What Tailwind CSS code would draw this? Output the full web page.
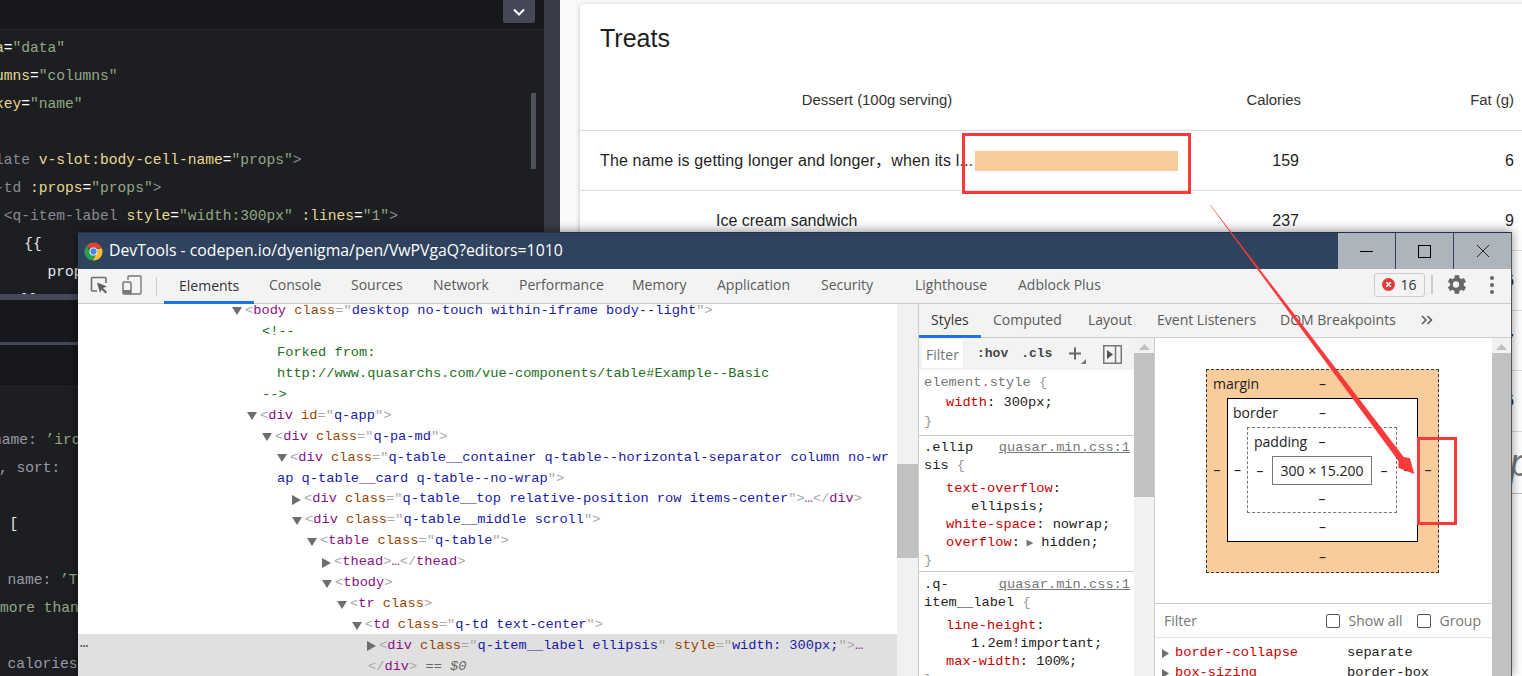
<!DOCTYPE html>
<html>
<head>
<meta charset="utf-8">
<script src="https://cdn.jsdelivr.net/npm/@tailwindcss/browser@4"></script>
</head>
<body class="bg-white">
<div class="relative w-[1522px] h-[676px] overflow-hidden flex font-['Liberation_Sans','Noto_Sans_CJK_SC',sans-serif]">

  <!-- Left: code editor -->
  <div class="w-[544px] shrink-0 h-full flex flex-col bg-[#1d1e22] overflow-hidden font-['Liberation_Mono','DejaVu_Sans_Mono',monospace] text-[14.6px] text-[#c8c8c8]">
    <div class="h-[30px] shrink-0 bg-[#17181b] border-b border-[#27282d] flex justify-end pr-[9px]">
      <div class="w-[32px] h-[23px] bg-[#444857] rounded-b-[2px] flex items-center justify-center">
        <svg width="12" height="8" viewBox="0 0 12 8"><path d="M1 1.5 L6 6.5 L11 1.5" fill="none" stroke="#fff" stroke-width="2"/></svg>
      </div>
    </div>
    <div class="relative h-[264px] shrink-0 overflow-hidden pt-[4px] -ml-[5px] [&>div]:h-[28px] [&>div]:leading-[28px] [&>div]:whitespace-pre">
      <div><span class="text-[#e6da8f]">a</span><span class="text-white">=</span><span class="text-[#93a883]">″data″</span></div>
      <div><span class="text-[#e6da8f]">umns</span><span class="text-white">=</span><span class="text-[#93a883]">″columns″</span></div>
      <div><span class="text-[#e6da8f]">key</span><span class="text-white">=</span><span class="text-[#93a883]">″name″</span></div>
      <div></div>
      <div><span class="text-[#8b8c92]">late </span><span class="text-[#e6da8f]">v-slot:body-cell-name</span><span class="text-white">=</span><span class="text-[#93a883]">″props″</span><span class="text-[#8b8c92]">&gt;</span></div>
      <div><span class="text-[#8b8c92]">-td </span><span class="text-[#e6da8f]">:props</span><span class="text-white">=</span><span class="text-[#93a883]">″props″</span><span class="text-[#8b8c92]">&gt;</span></div>
      <div><span class="text-[#8b8c92]"> &lt;q-item-label </span><span class="text-[#e6da8f]">style</span><span class="text-white">=</span><span class="text-[#93a883]">″width:300px″ </span><span class="text-[#e6da8f]">:lines</span><span class="text-white">=</span><span class="text-[#93a883]">″1″</span><span class="text-[#8b8c92]">&gt;</span></div>
      <div class="text-[#e8e8e8] pl-[3px]">   {{</div>
      <div class="text-[#e8e8e8]">      props</div>
      <div class="text-[#e8e8e8]">   }}</div>
    </div>
    <div class="h-[6px] shrink-0 bg-[#444857]"></div>
    <div class="h-[42px] shrink-0 bg-[#17181b]"></div>
    <div class="h-[3px] shrink-0 bg-[#444857]"></div>
    <div class="h-[42px] shrink-0 bg-[#17181b] border-b border-[#27282d]"></div>
    <div class="flex-1 pt-[39px] [&>div]:h-[28px] [&>div]:leading-[28px] [&>div]:whitespace-pre">
      <div class="-ml-[7px]"><span class="text-[#9a9aa6]">name: </span><span class="text-[#93a883]">’iron</span></div>
      <div class="-ml-[1px]"><span class="text-[#9a9aa6]">, sort: </span></div>
      <div></div>
      <div class="text-[#e8e8e8] -ml-[8px]">  [</div>
      <div></div>
      <div class="-ml-[10px]"><span class="text-[#9a9aa6]">  name: </span><span class="text-[#93a883]">’The</span></div>
      <div><span class="text-[#93a883]">more than</span></div>
      <div></div>
      <div class="text-[#9a9aa6] -ml-[10px]">  calories</div>
    </div>
  </div>
  <div class="absolute left-[531px] top-[93px] w-[5px] h-[76px] bg-[#4d4f5a]"></div>

  <!-- Divider -->
  <div class="w-[16px] shrink-0 h-full bg-[#3a3c47]"></div>

  <!-- Right: rendered page -->
  <div class="flex-1 h-full pl-[20px] pt-[4px] bg-[#fafafa]">
    <div class="w-[1000px] h-[680px] bg-white rounded-[4px] shadow-[0_1px_5px_rgba(0,0,0,0.25)] text-[16px] text-[#1f1f1f]">
      <div class="h-[65px] pl-[20px] pt-[16px] text-[25px] leading-[36px]">Treats</div>
      <div class="h-[62px] flex items-center border-b border-[#dcdcdc] text-[14.9px] text-[#333] pt-[1px]">
        <div class="w-[594px] text-center">Dessert (100g serving)</div>
        <div class="w-[127px] text-right">Calories</div>
        <div class="w-[213px] text-right">Fat (g)</div>
      </div>
      <div class="h-[60px] flex items-center border-b border-[#dcdcdc]">
        <div class="w-[594px] pl-[20px]"><div class="w-[375px] whitespace-nowrap overflow-hidden tracking-[0.15px]">The name is getting longer and longer，when its l...</div></div>
        <div class="w-[125px] text-right">159</div>
        <div class="w-[215px] text-right">6</div>
      </div>
      <div class="h-[60px] flex items-center border-b border-[#dcdcdc]">
        <div class="w-[594px] pl-[136px]">Ice cream sandwich</div>
        <div class="w-[125px] text-right">237</div>
        <div class="w-[215px] text-right">9</div>
      </div>
      <div class="h-[60px] flex items-center border-b border-[#dcdcdc]"><div class="w-[934px] text-right">6</div></div>
      <div class="h-[60px] flex items-center border-b border-[#dcdcdc]"><div class="w-[934px] text-right">7</div></div>
      <div class="h-[61px] flex items-center border-b border-[#dcdcdc]"><div class="w-[934px] text-right">6</div></div>
      <div class="h-[62px] flex items-center border-b border-[#bbb]"><div class="w-[951px] text-right text-[38px] leading-[38px] italic text-[#777]">p</div></div>
    </div>
  </div>

  <!-- DevTools window -->
  <div class="absolute left-[78px] top-[232px] w-[1434px] h-[444px] flex flex-col bg-white border-r border-[#555] shadow-[0_-1px_10px_rgba(0,0,0,0.45)] font-['Open_Sans',sans-serif]">
    <!-- title bar -->
    <div class="h-[37px] shrink-0 bg-[#2f435e] flex items-center border-t border-[#233247]">
      <svg class="ml-[6px] shrink-0" width="19" height="19" viewBox="0 0 20 20">
        <path d="M10 0.5 A9.5 9.5 0 0 1 18.8 6.5 L10 6.5 A3.5 3.5 0 0 0 6.8 8.2 L2.9 3.7 A9.5 9.5 0 0 1 10 0.5Z" fill="#db4437"/>
        <path d="M18.8 6.5 A9.5 9.5 0 0 1 9.2 19.5 L13 12.5 A3.5 3.5 0 0 0 13 7.5Z" fill="#fbc02d"/>
        <path d="M9.2 19.5 A9.5 9.5 0 0 1 2.9 3.7 L7 11.5 A3.5 3.5 0 0 0 13 12.5Z" fill="#2e9e4f"/>
        <circle cx="10" cy="10" r="4.3" fill="#fff"/><circle cx="10" cy="10" r="3.3" fill="#4a86e8"/>
      </svg>
      <div class="ml-[6px] text-[15.8px] text-white whitespace-nowrap flex-1">DevTools - codepen.io/dyenigma/pen/VwPVgaQ?editors=1010</div>
      <div class="w-[173px] h-full shrink-0 bg-[#aeb4bc] flex">
        <div class="flex-1 flex items-center justify-center border-r border-[#2f435e]"><div class="w-[13px] h-[1px] bg-black"></div></div>
        <div class="flex-1 flex items-center justify-center border-r border-[#2f435e]"><div class="w-[13px] h-[13px] border border-black"></div></div>
        <div class="flex-1 flex items-center justify-center"><svg width="14" height="14" viewBox="0 0 14 14"><path d="M1 1 L13 13 M13 1 L1 13" stroke="#222" stroke-width="1"/></svg></div>
      </div>
    </div>
    <!-- main toolbar -->
    <div class="h-[35px] shrink-0 bg-[#f3f3f3] border-b border-[#ccc] flex items-stretch text-[14px] text-[#5a5a5a] whitespace-nowrap [&>div]:pb-[3px]">
      <div class="w-[86px] shrink-0 flex items-center relative">
        <svg class="ml-[12px]" width="19" height="18" viewBox="0 0 19 18"><path d="M7 15 H2.5 A1 1 0 0 1 1.5 14 V2.5 A1 1 0 0 1 2.5 1.5 H15 A1 1 0 0 1 16 2.5 V7" fill="none" stroke="#6e6e6e" stroke-width="1.6"/><path d="M7 6.5 L17 10.5 L13 12 L17 16 L15.5 17.5 L11.5 13.5 L10 17Z" fill="#5f5f5f"/></svg>
        <svg class="ml-[13px]" width="20" height="20" viewBox="0 0 20 20"><path d="M6 5 V1.8 A1 1 0 0 1 7 1 H18 A1 1 0 0 1 19 2 V18 A1 1 0 0 1 18 19 H8" fill="none" stroke="#777" stroke-width="1.4"/><rect x="1" y="7" width="8" height="12" rx="1" fill="none" stroke="#777" stroke-width="1.5"/><rect x="1" y="15" width="8" height="4" fill="#777"/></svg>
        <div class="absolute right-[7px] top-[8px] w-[1px] h-[19px] bg-[#ccc]"></div>
      </div>
      <div class="w-[90px] pl-[15px] flex items-center border-b-[3px] border-[#1a73e8] text-[#333] -mb-[1px] !pb-0">Elements</div>
      <div class="w-[82px] pl-[15px] flex items-center">Console</div>
      <div class="w-[82px] pl-[15px] flex items-center">Sources</div>
      <div class="w-[86px] pl-[15px] flex items-center">Network</div>
      <div class="w-[113px] pl-[15px] flex items-center">Performance</div>
      <div class="w-[85px] pl-[15px] flex items-center">Memory</div>
      <div class="w-[104px] pl-[15px] flex items-center">Application</div>
      <div class="w-[94px] pl-[15px] flex items-center">Security</div>
      <div class="w-[103px] pl-[15px] flex items-center">Lighthouse</div>
      <div class="w-[110px] pl-[15px] flex items-center">Adblock Plus</div>
      <div class="flex-1 flex items-center justify-end pr-[17px]">
        <div class="h-[24px] w-[51px] border border-[#ccc] rounded-[3px] flex items-center justify-center gap-[5px] text-[#333]">
          <svg width="13" height="13" viewBox="0 0 13 13"><circle cx="6.5" cy="6.5" r="6.5" fill="#e23a3f"/><path d="M4.3 4.3 L8.7 8.7 M8.7 4.3 L4.3 8.7" stroke="#fff" stroke-width="1.6"/></svg>16
        </div>
        <div class="w-[2px] h-[19px] bg-[#ccc] ml-[6px] mr-[13px]"></div>
        <svg width="20" height="19" viewBox="2.5 3 19 18"><path fill="#666" fill-rule="evenodd" d="M19.4 13 a7.5 7.5 0 0 0 0-2 l2.1-1.6-2-3.5-2.5 1 a7.5 7.5 0 0 0-1.7-1 L14.9 3.2 h-4 L10.5 5.9 a7.5 7.5 0 0 0-1.7 1 l-2.5-1-2 3.5 2.1 1.6 a7.5 7.5 0 0 0 0 2 l-2.1 1.6 2 3.5 2.5-1 a7.5 7.5 0 0 0 1.7 1 l.4 2.7 h4 l.4-2.7 a7.5 7.5 0 0 0 1.7-1 l2.5 1 2-3.5Z M12 15 a3 3 0 1 1 0-6 a3 3 0 0 1 0 6Z"/></svg>
        <div class="ml-[24px] flex flex-col gap-[3px]">
          <div class="w-[4px] h-[4px] rounded-full bg-[#666]"></div>
          <div class="w-[4px] h-[4px] rounded-full bg-[#666]"></div>
          <div class="w-[4px] h-[4px] rounded-full bg-[#666]"></div>
        </div>
      </div>
    </div>
    <!-- body -->
    <div class="flex-1 flex min-h-0">
      <!-- elements -->
      <div class="w-[840px] shrink-0 relative overflow-hidden font-['Liberation_Mono',monospace] text-[13.68px] text-[#881280] [&>div]:whitespace-pre [&>div]:h-[20.95px] [&>div]:leading-[20.95px] [&>div]:flex [&>div]:items-center">
        <div class="pl-[167px] -mt-[3px]"><svg class="-ml-[13px] mr-[3px]" width="10" height="8" viewBox="0 0 10 8"><path d="M0 0H10L5 8Z" fill="#6e6e6e"/></svg><span><span class="text-[#a8a8a8]">&lt;</span>body <span class="text-[#994500]">class</span><span class="text-[#a8a8a8]">="</span><span class="text-[#1a1aa6]">desktop no-touch within-iframe body--light</span><span class="text-[#a8a8a8]">"&gt;</span></span></div>
        <div class="pl-[184px] text-[#236e25]">&lt;!--</div>
        <div class="pl-[199px] text-[#236e25]">Forked from:</div>
        <div class="pl-[199px] text-[#236e25]">http://www.quasarchs.com/vue-components/table#Example--Basic</div>
        <div class="pl-[184px] text-[#236e25]">--&gt;</div>
        <div class="pl-[182px]"><svg class="-ml-[13px] mr-[3px]" width="10" height="8" viewBox="0 0 10 8"><path d="M0 0H10L5 8Z" fill="#6e6e6e"/></svg><span><span class="text-[#a8a8a8]">&lt;</span>div <span class="text-[#994500]">id</span><span class="text-[#a8a8a8]">="</span><span class="text-[#1a1aa6]">q-app</span><span class="text-[#a8a8a8]">"&gt;</span></span></div>
        <div class="pl-[197px]"><svg class="-ml-[13px] mr-[3px]" width="10" height="8" viewBox="0 0 10 8"><path d="M0 0H10L5 8Z" fill="#6e6e6e"/></svg><span><span class="text-[#a8a8a8]">&lt;</span>div <span class="text-[#994500]">class</span><span class="text-[#a8a8a8]">="</span><span class="text-[#1a1aa6]">q-pa-md</span><span class="text-[#a8a8a8]">"&gt;</span></span></div>
        <div class="pl-[212px]"><svg class="-ml-[13px] mr-[3px]" width="10" height="8" viewBox="0 0 10 8"><path d="M0 0H10L5 8Z" fill="#6e6e6e"/></svg><span><span class="text-[#a8a8a8]">&lt;</span>div <span class="text-[#994500]">class</span><span class="text-[#a8a8a8]">="</span><span class="text-[#1a1aa6]">q-table__container q-table--horizontal-separator column no-wr</span></span></div>
        <div class="pl-[199px] text-[#1a1aa6]"><span>ap q-table__card q-table--no-wrap<span class="text-[#a8a8a8]">"&gt;</span></span></div>
        <div class="pl-[227px]"><svg class="-ml-[13px] mr-[3px]" width="9" height="10" viewBox="0 0 9 10"><path d="M0 0V10L9 5Z" fill="#6e6e6e"/></svg><span><span class="text-[#a8a8a8]">&lt;</span>div <span class="text-[#994500]">class</span><span class="text-[#a8a8a8]">="</span><span class="text-[#1a1aa6]">q-table__top relative-position row items-center</span><span class="text-[#a8a8a8]">"&gt;</span>…<span class="text-[#a8a8a8]">&lt;/</span>div<span class="text-[#a8a8a8]">&gt;</span></span></div>
        <div class="pl-[227px]"><svg class="-ml-[13px] mr-[3px]" width="10" height="8" viewBox="0 0 10 8"><path d="M0 0H10L5 8Z" fill="#6e6e6e"/></svg><span><span class="text-[#a8a8a8]">&lt;</span>div <span class="text-[#994500]">class</span><span class="text-[#a8a8a8]">="</span><span class="text-[#1a1aa6]">q-table__middle scroll</span><span class="text-[#a8a8a8]">"&gt;</span></span></div>
        <div class="pl-[242px]"><svg class="-ml-[13px] mr-[3px]" width="10" height="8" viewBox="0 0 10 8"><path d="M0 0H10L5 8Z" fill="#6e6e6e"/></svg><span><span class="text-[#a8a8a8]">&lt;</span>table <span class="text-[#994500]">class</span><span class="text-[#a8a8a8]">="</span><span class="text-[#1a1aa6]">q-table</span><span class="text-[#a8a8a8]">"&gt;</span></span></div>
        <div class="pl-[257px]"><svg class="-ml-[13px] mr-[3px]" width="9" height="10" viewBox="0 0 9 10"><path d="M0 0V10L9 5Z" fill="#6e6e6e"/></svg><span><span class="text-[#a8a8a8]">&lt;</span>thead<span class="text-[#a8a8a8]">&gt;</span>…<span class="text-[#a8a8a8]">&lt;/</span>thead<span class="text-[#a8a8a8]">&gt;</span></span></div>
        <div class="pl-[257px]"><svg class="-ml-[13px] mr-[3px]" width="10" height="8" viewBox="0 0 10 8"><path d="M0 0H10L5 8Z" fill="#6e6e6e"/></svg><span><span class="text-[#a8a8a8]">&lt;</span>tbody<span class="text-[#a8a8a8]">&gt;</span></span></div>
        <div class="pl-[272px]"><svg class="-ml-[13px] mr-[3px]" width="10" height="8" viewBox="0 0 10 8"><path d="M0 0H10L5 8Z" fill="#6e6e6e"/></svg><span><span class="text-[#a8a8a8]">&lt;</span>tr <span class="text-[#994500]">class</span><span class="text-[#a8a8a8]">&gt;</span></span></div>
        <div class="pl-[287px]"><svg class="-ml-[13px] mr-[3px]" width="10" height="8" viewBox="0 0 10 8"><path d="M0 0H10L5 8Z" fill="#6e6e6e"/></svg><span><span class="text-[#a8a8a8]">&lt;</span>td <span class="text-[#994500]">class</span><span class="text-[#a8a8a8]">="</span><span class="text-[#1a1aa6]">q-td text-center</span><span class="text-[#a8a8a8]">"&gt;</span></span></div>
        <div class="pl-[302px] bg-[#e0e0e0] relative -mt-[2px] pt-[2px] !h-[22.95px]"><span class="absolute left-[2px] top-0 text-[#666] font-bold">…</span><svg class="-ml-[13px] mr-[3px]" width="9" height="10" viewBox="0 0 9 10"><path d="M0 0V10L9 5Z" fill="#6e6e6e"/></svg><span><span class="text-[#a8a8a8]">&lt;</span>div <span class="text-[#994500]">class</span><span class="text-[#a8a8a8]">="</span><span class="text-[#1a1aa6]">q-item__label ellipsis</span><span class="text-[#a8a8a8]">" </span><span class="text-[#994500]">style</span><span class="text-[#a8a8a8]">="</span><span class="text-[#1a1aa6]">width: 300px;</span><span class="text-[#a8a8a8]">"&gt;</span>…</span></div>
        <div class="pl-[290px] bg-[#e0e0e0]"><span><span class="text-[#a8a8a8]">&lt;/</span>div<span class="text-[#a8a8a8]">&gt;</span><span class="text-[#666]"> == <i>$0</i></span></span></div>
        <div class="absolute right-0 top-0 !h-full w-[21px] bg-[#f1f1f1] !block">
          <div class="mt-[118px] h-[94px] bg-[#c1c1c1]"></div>
        </div>
      </div>
      <!-- side pane -->
      <div class="flex-1 min-w-0 flex flex-col bg-white border-l border-[#ccc]">
        <div class="h-[34px] shrink-0 bg-[#f3f3f3] border-b border-[#ccc] flex text-[14px] text-[#5a5a5a] whitespace-nowrap [&>div]:pb-[2px]">
          <div class="w-[62px] pl-[12px] flex items-center border-b-[3px] border-[#1a73e8] text-[#333] -mb-[1px] !pb-0">Styles</div>
          <div class="w-[95px] pl-[12px] flex items-center">Computed</div>
          <div class="w-[69px] pl-[12px] flex items-center">Layout</div>
          <div class="w-[123px] pl-[12px] flex items-center">Event Listeners</div>
          <div class="w-[153px] pl-[12px] flex items-center">DOM Breakpoints</div>
          <div class="flex items-center"><svg width="12" height="10" viewBox="0 0 12 10"><path d="M1 1 L5 5 L1 9 M6.5 1 L10.5 5 L6.5 9" fill="none" stroke="#555" stroke-width="1.5"/></svg></div>
        </div>
        <div class="flex-1 flex min-h-0">
          <!-- styles -->
          <div class="w-[236px] shrink-0 flex border-r border-[#ccc] overflow-hidden">
            <div class="w-[215px] shrink-0 flex flex-col">
              <div class="h-[32px] shrink-0 bg-[#f3f3f3] flex items-center">
                <div class="ml-[3px] w-[41px] h-[28px] bg-white flex items-center justify-center text-[14px] text-[#777]">Filter</div>
                <div class="ml-[14px] font-['Liberation_Mono',monospace] font-bold text-[13px] text-[#444]">:hov</div>
                <div class="ml-[13px] font-['Liberation_Mono',monospace] font-bold text-[13px] text-[#444]">.cls</div>
                <div class="relative ml-[14px] w-[20px] h-[20px]">
                  <svg width="20" height="20" viewBox="0 0 20 20"><path d="M3 9.5H15M9 3.5V15.5" stroke="#666" stroke-width="2"/><path d="M20 20V15L15 20Z" fill="#777"/></svg>
                </div>
                <svg class="ml-[17px]" width="19" height="19" viewBox="0 0 19 19"><rect x="0.75" y="0.75" width="17.5" height="17.5" fill="none" stroke="#777" stroke-width="1.5"/><path d="M12.5 1V18" stroke="#777" stroke-width="1.5"/><path d="M4 5V14L10 9.5Z" fill="#555"/></svg>
              </div>
              <div class="font-['Liberation_Mono',monospace] text-[13.68px] leading-[18px] text-[#222] [&>div>div]:whitespace-pre">
                <div class="h-[66px] pt-[4px] pl-[5px] border-b border-[#ccc]">
                  <div class="text-[#777]">element.style <span class="text-[#999]">{</span></div>
                  <div class="mt-[2px] pl-[22px]"><span class="text-[#c80000]">width</span>: 300px;</div>
                  <div class="mt-[1px] text-[#999]">}</div>
                </div>
                <div class="h-[136px] pt-[3px] pl-[5px] border-b border-[#ccc] relative">
                  <div>.ellip</div>
                  <div>sis <span class="text-[#999]">{</span></div>
                  <div class="mt-[5px] pl-[22px] text-[#c80000]">text-overflow<span class="text-[#222]">:</span></div>
                  <div class="pl-[47px]">ellipsis;</div>
                  <div class="pl-[22px]"><span class="text-[#c80000]">white-space</span>: nowrap;</div>
                  <div class="pl-[22px]"><span class="text-[#c80000]">overflow</span>:<span class="text-[11px] text-[#777]"> ▶</span> hidden;</div>
                  <div class="text-[#999]">}</div>
                  <div class="absolute right-[4px] top-[3px] text-[#777] underline">quasar.min.css:1</div>
                </div>
                <div class="pt-[4px] pl-[5px] relative">
                  <div>.q-</div>
                  <div>item__label <span class="text-[#999]">{</span></div>
                  <div class="mt-[5px] pl-[22px] text-[#c80000]">line-height<span class="text-[#222]">:</span></div>
                  <div class="pl-[47px]">1.2em!important;</div>
                  <div class="pl-[22px]"><span class="text-[#c80000]">max-width</span>: 100%;</div>
                  <div class="text-[#999]">}</div>
                  <div class="absolute right-[4px] top-[4px] text-[#777] underline">quasar.min.css:1</div>
                </div>
              </div>
            </div>
            <div class="flex-1 bg-[#f1f1f1] flex flex-col items-center">
              <svg class="mt-[6px]" width="11" height="6" viewBox="0 0 11 6"><path d="M0 6H11L5.5 0Z" fill="#c1c1c1"/></svg>
              <div class="mt-[3px] w-full h-[144px] bg-[#c1c1c1]"></div>
            </div>
          </div>
          <!-- computed -->
          <div class="flex-1 min-w-0 flex">
            <div class="w-[337px] shrink-0 flex flex-col">
              <div class="h-[266px] shrink-0 pl-[51px] pt-[31px] border-b border-[#ccc] text-[14px] text-[#222] leading-none whitespace-nowrap">
                <!-- margin box -->
                <div class="w-[233px] h-[204px] bg-[#f8cc9b] border border-dashed border-[#333] flex flex-col">
                  <div class="h-[28px] shrink-0 grid grid-cols-[1fr_auto_1fr] items-center px-[6px]"><span>margin</span><span>–</span><span></span></div>
                  <div class="h-[144px] shrink-0 flex items-center">
                    <div class="w-[20px] text-center">–</div>
                    <div class="w-[191px] h-full bg-white border border-black flex flex-col">
                      <div class="h-[28px] shrink-0 grid grid-cols-[1fr_auto_1fr] items-center px-[5px]"><span>border</span><span>–</span><span></span></div>
                      <div class="h-[86px] shrink-0 flex items-center">
                        <div class="w-[19px] text-center">–</div>
                        <div class="w-[150px] h-full border border-dashed border-[#777] flex flex-col">
                          <div class="h-[28px] shrink-0 grid grid-cols-[1fr_auto_1fr] items-center px-[6px]"><span>padding</span><span>–</span><span></span></div>
                          <div class="h-[29px] shrink-0 flex items-center">
                            <div class="w-[24px] text-center">–</div>
                            <div class="w-[100px] h-full border border-[#777] flex items-center justify-center">300 × 15.200</div>
                            <div class="w-[24px] text-center">–</div>
                          </div>
                          <div class="flex-1 flex items-center justify-center">–</div>
                        </div>
                        <div class="w-[20px] text-center">–</div>
                      </div>
                      <div class="flex-1 flex items-center justify-center">–</div>
                    </div>
                    <div class="w-[20px] text-center">–</div>
                  </div>
                  <div class="flex-1 flex items-center justify-center">–</div>
                </div>
              </div>
              <div class="h-[34px] shrink-0 border-b border-[#e4e4e4] flex items-center text-[14px] text-[#777]">
                <span class="ml-[9px] flex-1">Filter</span>
                <span class="w-[14px] h-[14px] rounded-[2px] border border-[#555] bg-white"></span><span class="ml-[8px]">Show all</span>
                <span class="ml-[14px] w-[14px] h-[14px] rounded-[2px] border border-[#555] bg-white"></span><span class="ml-[9px] mr-[11px]">Group</span>
              </div>
              <div class="font-['Liberation_Mono',monospace] text-[13.68px] leading-[20px] whitespace-nowrap pt-[5px]">
                <div class="flex items-center h-[20px]"><svg class="ml-[7px] mr-[6px]" width="7" height="9" viewBox="0 0 7 9"><path d="M0 0V9L7 4.5Z" fill="#6e6e6e"/></svg><span class="w-[172px] text-[#c80000]">border-collapse</span><span class="text-[#222]">separate</span></div>
                <div class="flex items-center h-[20px]"><svg class="ml-[7px] mr-[6px]" width="7" height="9" viewBox="0 0 7 9"><path d="M0 0V9L7 4.5Z" fill="#6e6e6e"/></svg><span class="w-[172px] text-[#c80000]">box-sizing</span><span class="text-[#222]">border-box</span></div>
              </div>
            </div>
            <div class="flex-1 bg-[#f1f1f1] flex flex-col items-center">
              <svg class="mt-[6px]" width="11" height="6" viewBox="0 0 11 6"><path d="M0 6H11L5.5 0Z" fill="#c1c1c1"/></svg>
              <div class="mt-[3px] w-full flex-1 bg-[#c1c1c1]"></div>
            </div>
          </div>
        </div>
      </div>
    </div>
  </div>

  <!-- Annotations over the windows -->
  <div class="absolute left-[975px] top-[151px] w-[203px] h-[20px] bg-[#f8cc9b]"></div>
  <div class="absolute left-[962px] top-[133px] w-[229px] h-[61px] border-[3px] border-[#f93a3a]"></div>
  <div class="absolute left-[1417px] top-[437px] w-[40px] h-[88px] border-[3px] border-[#f93a3a]"></div>
  <svg class="absolute left-0 top-0 pointer-events-none" width="1522" height="676" viewBox="0 0 1522 676">
    <path d="M1210 205 L1210.5 205 L1403.7 457 L1410 458.3 L1414.3 474 L1398.3 467.7 L1398.5 461 Z" fill="#f93a3a"/>
  </svg>
</div>
</body>
</html>
